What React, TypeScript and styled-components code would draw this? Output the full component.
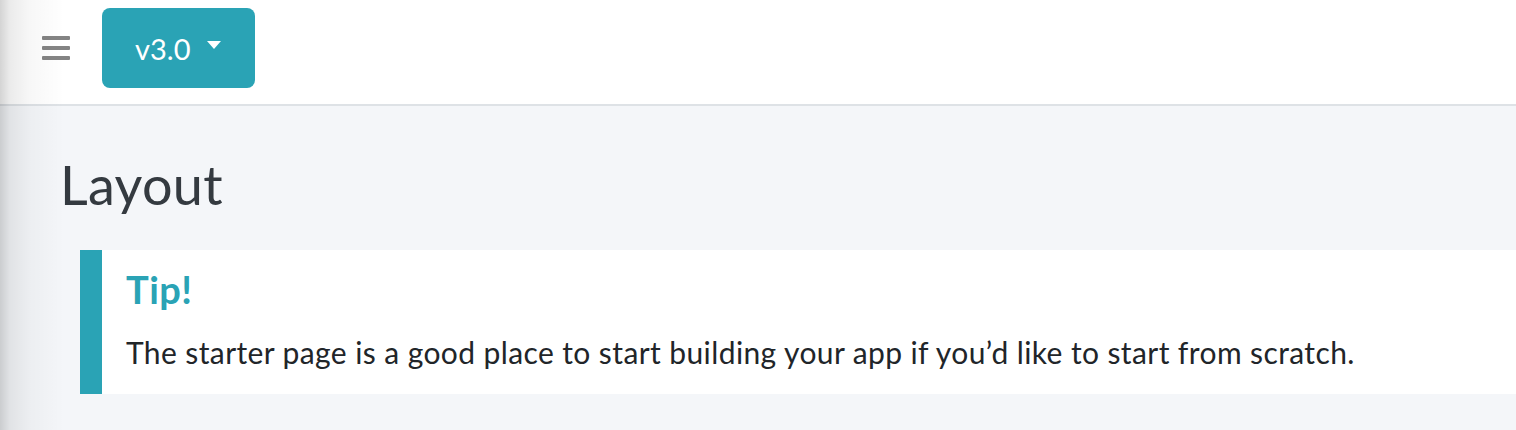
import React from "react";
import styled, { createGlobalStyle } from "styled-components";

const GlobalStyle = createGlobalStyle`
  html, body { margin: 0; padding: 0; background: #ffffff; }
  body { font-family: Lato, "Noto Sans", sans-serif; overflow: hidden; }
  * { box-sizing: border-box; }
`;

const teal = "#2aa3b5";

const Page = styled.div`
  position: relative;
  min-height: 430px;
  display: flex;
  flex-direction: column;
  background: #f4f6f9;
`;

const SideShadow = styled.div`
  position: absolute;
  top: 0;
  left: 0;
  bottom: 0;
  width: 64px;
  pointer-events: none;
  background: linear-gradient(
    to right,
    rgba(0, 0, 0, 0.17) 0px,
    rgba(0, 0, 0, 0.08) 10px,
    rgba(0, 0, 0, 0.03) 30px,
    rgba(0, 0, 0, 0) 64px
  );
`;

const Header = styled.header`
  height: 106px;
  padding: 8px 0 16px 42px;
  display: flex;
  align-items: center;
  gap: 32px;
  background: #ffffff;
  border-bottom: 2px solid #dee2e6;
`;

const MenuButton = styled.button`
  display: flex;
  align-items: center;
  justify-content: center;
  padding: 0;
  border: 0;
  background: transparent;
  color: #838383;
  width: 28px;
  height: 24px;
`;

const VersionButton = styled.button`
  display: flex;
  align-items: center;
  gap: 17px;
  height: 80px;
  padding: 0 34px 0 33px;
  border: 0;
  border-radius: 8px;
  background: ${teal};
  color: #ffffff;
  font-family: Lato, "Noto Sans", sans-serif;
  font-size: 29px;
  line-height: 1;
`;

const Caret = styled.span`
  width: 0;
  height: 0;
  border-left: 7.5px solid transparent;
  border-right: 7.5px solid transparent;
  border-top: 8px solid #ffffff;
  margin-top: -6px;
`;

const Content = styled.main`
  flex: 1;
  padding: 47px 0 36px 60px;
`;

const Title = styled.h1`
  margin: 0 0 32px;
  font-family: Lato, "Noto Sans", sans-serif;
  font-weight: 400;
  font-size: 54px;
  line-height: 1.2;
  letter-spacing: 0.3px;
  color: #343a40;
`;

const Callout = styled.section`
  margin-left: 20px;
  margin-right: -40px;
  padding: 18px 24px 19px 24px;
  background: #ffffff;
  border-left: 22px solid ${teal};
`;

const CalloutTitle = styled.h5`
  margin: 0 0 20px;
  font-family: Lato, "Noto Sans", sans-serif;
  font-weight: 700;
  font-size: 38px;
  line-height: 1.15;
  letter-spacing: 0.5px;
  color: ${teal};
`;

const CalloutText = styled.p`
  margin: 0;
  font-family: Lato, "Noto Sans", sans-serif;
  font-size: 30px;
  line-height: 1.45;
  letter-spacing: 0.4px;
  color: #212529;
`;

const BarsIcon = () => (
  <svg width="28" height="24" viewBox="0 0 28 24" aria-hidden="true">
    <rect x="0" y="0" width="28" height="4" rx="1" fill="currentColor" />
    <rect x="0" y="10" width="28" height="4" rx="1" fill="currentColor" />
    <rect x="0" y="20" width="28" height="4" rx="1" fill="currentColor" />
  </svg>
);

export default function App() {
  return (
    <>
      <GlobalStyle />
      <Page>
        <Header>
          <MenuButton aria-label="Toggle menu">
            <BarsIcon />
          </MenuButton>
          <VersionButton>
            v3.0
            <Caret />
          </VersionButton>
        </Header>
        <Content>
          <Title>Layout</Title>
          <Callout>
            <CalloutTitle>Tip!</CalloutTitle>
            <CalloutText>
              The starter page is a good place to start building your app if you’d like to start from scratch.
            </CalloutText>
          </Callout>
        </Content>
        <SideShadow />
      </Page>
    </>
  );
}
